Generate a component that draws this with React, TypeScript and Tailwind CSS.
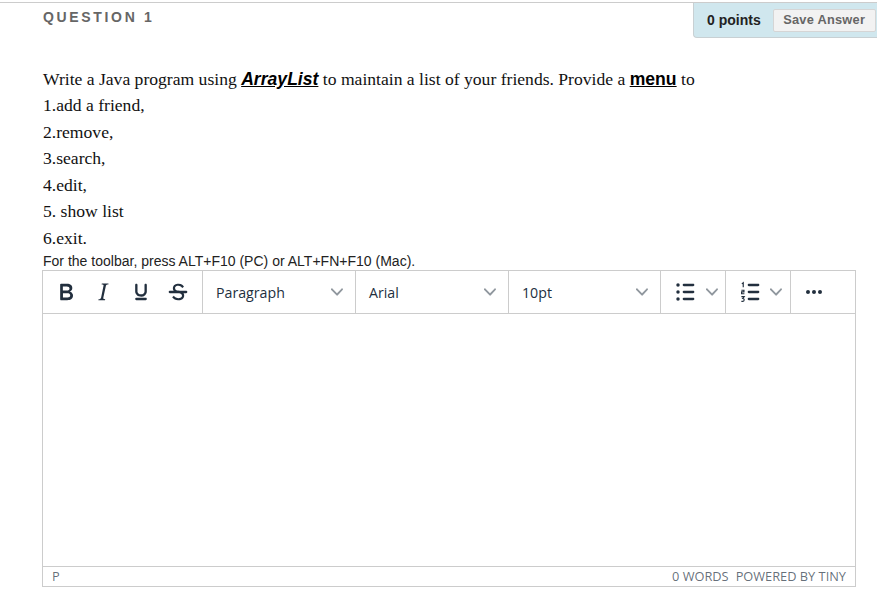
const BODY = "[font-family:'Liberation_Serif',serif]";

function Icon({ d, extra, size = 28 }: { d: string; extra?: React.ReactNode; size?: number }) {
  return (
    <svg width={size} height={size} viewBox="0 0 24 24" fill="#222f3e" className="shrink-0">
      <path d={d} />
      {extra}
    </svg>
  );
}

function Chevron() {
  return (
    <svg width="12" height="12" viewBox="0 0 10 10" fill="#222f3e" fillOpacity="0.5" className="shrink-0">
      <path d="M8.7 2.2c.3-.3.8-.3 1 0 .4.4.4.9 0 1.2L5.7 7.8c-.3.3-.9.3-1.2 0L.2 3.4a.8.8 0 0 1 0-1.2c.3-.3.8-.3 1.1 0L5 6l3.7-3.8z" />
    </svg>
  );
}

const lines3 = "M11 5h8c.6 0 1 .4 1 1s-.4 1-1 1h-8a1 1 0 0 1 0-2zm0 6h8c.6 0 1 .4 1 1s-.4 1-1 1h-8a1 1 0 0 1 0-2zm0 6h8c.6 0 1 .4 1 1s-.4 1-1 1h-8a1 1 0 0 1 0-2z";

function Select({ label, w }: { label: string; w: string }) {
  return (
    <div className={`flex items-center justify-between border-r border-[#cccccc] pl-[13px] pr-[12px] text-[14.2px] text-[#222f3e] ${w}`}>
      <span className="pt-[2px] [font-family:'Open_Sans',sans-serif]">{label}</span>
      <Chevron />
    </div>
  );
}

export default function App() {
  return (
    <div className="relative h-[614px] w-[877px] overflow-hidden bg-white pt-[2px]">
      <div className="flex h-[36px] items-start justify-between border-t border-[#cccccc]">
        <h2 className="pl-[43px] pt-[6px] text-[14px] font-bold leading-[16px] tracking-[0.19em] text-[#666666] [font-family:'Liberation_Sans',sans-serif]">
          QUESTION 1
        </h2>
        <div className="flex h-[35px] w-[184px] items-center rounded-bl-[4px] border-b border-l border-[#c8d0d3] bg-[#d0e7ee] pl-[13px] [font-family:'Liberation_Sans',sans-serif]">
          <span className="whitespace-nowrap text-[14px] font-bold text-[#222222]">0 points</span>
          <button className="ml-[12px] h-[23px] w-[103px] whitespace-nowrap rounded-[2px] border border-[#d5d5d5] bg-[#f2f2f2] text-[12.8px] font-bold tracking-[0.02em] text-[#666666]">
            Save Answer
          </button>
        </div>
      </div>

      <div className={`pl-[43px] pt-[27.6px] text-[17.6px] leading-[26.5px] text-[#111111] ${BODY}`}>
        <p>
          Write a Java program using{" "}
          <strong className="font-bold italic text-black underline [font-family:'Liberation_Sans',sans-serif]">ArrayList</strong>{" "}
          to maintain a list of your friends. Provide a{" "}
          <strong className="font-bold text-black underline [font-family:'Liberation_Sans',sans-serif]">menu</strong> to
        </p>
        <p>1.add a friend,</p>
        <p>2.remove,</p>
        <p>3.search,</p>
        <p>4.edit,</p>
        <p>5. show list</p>
        <p>6.exit.</p>
      </div>

      <p className="h-[18.9px] whitespace-nowrap pl-[43px] pt-[2.4px] text-[14.03px] leading-[17.7px] text-[#222222] [font-family:'Liberation_Sans',sans-serif]">
        For the toolbar, press ALT+F10 (PC) or ALT+FN+F10 (Mac).
      </p>

      <div className="ml-[42px] flex h-[317px] w-[814px] flex-col border border-[#cccccc]">
        <div className="flex h-[43px] shrink-0 border-b border-[#cccccc]">
          <div className="flex w-[160px] items-center gap-[9.3px] border-r border-[#cccccc] pl-[9px]">
            <Icon d="M7.8 19c-.3 0-.5 0-.6-.2l-.2-.5V5.7c0-.2 0-.4.2-.5l.6-.2h5c1.5 0 2.7.3 3.5 1 .7.6 1.1 1.4 1.1 2.5a3 3 0 0 1-.6 1.9c-.4.6-1 1-1.6 1.2.4.1.9.3 1.3.6s.8.7 1 1.2c.4.4.5 1 .5 1.6 0 1.3-.4 2.3-1.3 3-.8.7-2.1 1-3.8 1H7.8zm5-8.3c.6 0 1.2-.1 1.6-.5.4-.3.6-.7.6-1.3 0-1.1-.8-1.7-2.3-1.7H9.3v3.5h3.4zm.5 6c.7 0 1.3-.1 1.7-.4.4-.4.6-.9.6-1.5s-.2-1-.7-1.4c-.4-.3-1-.4-2-.4H9.4v3.8h4z" />
            <Icon d="M16.7 4.7l-.1.9h-.3c-.6 0-1 0-1.4.3-.3.3-.4.6-.5 1.1l-2.1 9.8v.6c0 .5.4.8 1.4.8h.2l-.2.8H8l.2-.8h.2c1.1 0 1.8-.5 2-1.5l2-9.8.1-.5c0-.6-.4-.8-1.4-.8h-.3l.2-.9h5.8z" />
            <Icon d="M16 5c.6 0 1 .4 1 1v5.5a4 4 0 0 1-.4 1.8l-1 1.4a5.3 5.3 0 0 1-5.5 1 5 5 0 0 1-1.6-1c-.5-.4-.8-.9-1.1-1.4a4 4 0 0 1-.4-1.8V6c0-.6.4-1 1-1s1 .4 1 1v5.5c0 .3 0 .6.2 1l.6.7a3.3 3.3 0 0 0 2.2.8 3.4 3.4 0 0 0 2.2-.8c.3-.2.4-.5.6-.8l.2-.9V6c0-.6.4-1 1-1zM8 17h8c.6 0 1 .4 1 1s-.4 1-1 1H8a1 1 0 0 1 0-2z" />
            <Icon
              d="M15.6 8.5c-.5-.7-1-1.1-1.3-1.3-.6-.4-1.3-.6-2-.6-2.7 0-2.8 1.7-2.8 2.1 0 1.6 1.8 2 3.2 2.3 4.4.9 4.6 2.8 4.6 3.9 0 1.4-.7 4.1-5 4.1A6.2 6.2 0 0 1 7 16.4l1.5-1.1c.4.6 1.6 2 3.7 2 1.6 0 2.5-.4 3-1.2.4-.8.3-2-.8-2.6-.7-.4-1.6-.7-2.9-1-1-.2-3.9-.8-3.9-3.6C7.6 6 10.3 5 12.4 5c2.9 0 4.2 1.6 4.7 2.4l-1.5 1.1z"
              extra={<path d="M5 11h14a1 1 0 0 1 0 2H5a1 1 0 0 1 0-2z" />}
            />
          </div>
          <Select label="Paragraph" w="w-[153px]" />
          <Select label="Arial" w="w-[153px]" />
          <Select label="10pt" w="w-[152px]" />
          <div className="flex w-[65px] items-center gap-[7px] border-r border-[#cccccc] pl-[10px]">
            <Icon
              d={lines3}
              extra={
                <>
                  <circle cx="6" cy="6" r="1.5" />
                  <circle cx="6" cy="12" r="1.5" />
                  <circle cx="6" cy="18" r="1.5" />
                </>
              }
            />
            <Chevron />
          </div>
          <div className="flex w-[65px] items-center gap-[6px] border-r border-[#cccccc] pl-[10px]">
            <Icon
              d={lines3}
              extra={
                <g fill="none" stroke="#222f3e" strokeWidth="1">
                  <path d="M5 5l1.2-1v4" />
                  <path d="M4.6 10.5h2.2v1.4H4.8v1.6h2.4" />
                  <path d="M4.6 16h2.4l-1.2 1.6c1.6 0 1.6 2.4-.2 2.4h-1" />
                </g>
              }
            />
            <Chevron />
          </div>
          <div className="flex items-center pl-[11px]">
            <Icon size={24} d="M6 10a2 2 0 0 0-2 2c0 1.1.9 2 2 2a2 2 0 0 0 2-2 2 2 0 0 0-2-2zm12 0a2 2 0 0 0-2 2c0 1.1.9 2 2 2a2 2 0 0 0 2-2 2 2 0 0 0-2-2zm-6 0a2 2 0 0 0-2 2c0 1.1.9 2 2 2a2 2 0 0 0 2-2 2 2 0 0 0-2-2z" />
          </div>
        </div>
        <div className="flex-1" />
        <div className="flex h-[20px] shrink-0 items-center justify-between border-t border-[#cccccc] pl-[9px] pr-[9px] pt-[1px] text-[12.8px] text-[rgba(34,47,62,0.7)] [font-family:'Open_Sans',sans-serif]">
          <span>P</span>
          <span className="flex gap-[7px]">
            <span>0 WORDS</span>
            <span>POWERED BY TINY</span>
          </span>
        </div>
      </div>
    </div>
  );
}
